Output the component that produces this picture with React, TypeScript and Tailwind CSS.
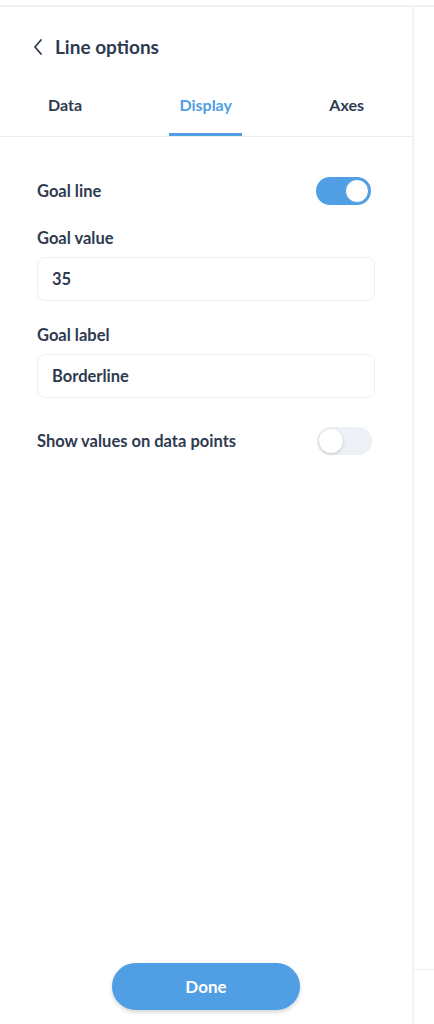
import React, { useState } from 'react';

const textDark = 'text-[#2e3a4f]';

const Toggle: React.FC<{ on: boolean; onChange: () => void }> = ({ on, onChange }) => (
  <button
    type="button"
    onClick={onChange}
    className={`relative flex h-[28px] w-[55px] items-center rounded-full px-[2px] ${
      on ? 'justify-end bg-[#509ee3]' : 'justify-start bg-[#edf0f5]'
    }`}
  >
    <span
      className={`block h-[24px] w-[24px] rounded-full bg-white ${
        on ? 'border border-[#509ee3]' : 'shadow-[0_1px_3px_rgba(0,0,0,0.2)]'
      }`}
    />
  </button>
);

const TextField: React.FC<{ value: string; onChange: (v: string) => void }> = ({ value, onChange }) => (
  <input
    type="text"
    value={value}
    onChange={(e) => onChange(e.target.value)}
    className={`h-[44px] w-full rounded-lg border border-[#eceef1] px-[14px] text-[16.5px] font-bold ${textDark} outline-none`}
  />
);

export default function App() {
  const [tab, setTab] = useState('Display');
  const [goalLine, setGoalLine] = useState(true);
  const [showValues, setShowValues] = useState(false);
  const [goalValue, setGoalValue] = useState('35');
  const [goalLabel, setGoalLabel] = useState('Borderline');

  return (
    <div className="flex h-[1024px] w-[434px] flex-col bg-white font-['Lato',sans-serif]">
      <div className="h-[5px] shrink-0" />
      <div className="flex flex-1 border-t-2 border-[#f2f2f2]">
        {/* sidebar */}
        <div className="flex w-[414px] flex-col border-r-2 border-[#f2f2f2]">
          <div className="flex items-center pl-[31px] pt-[28px]">
            <svg width="14" height="24" viewBox="0 0 14 24" fill="none" className="mr-[10px]">
              <path d="M10 5 L4 12 L10 19" stroke="#2e3a4f" strokeWidth="1.8" strokeLinecap="round" strokeLinejoin="round" />
            </svg>
            <span className={`text-[19px] leading-[24px] font-bold ${textDark}`}>Line options</span>
          </div>

          <div className="mt-[34px] flex justify-between border-b border-[#eceef1] px-[38px]">
            {['Data', 'Display', 'Axes'].map((t) => (
              <button
                key={t}
                type="button"
                onClick={() => setTab(t)}
                className={`border-b-[3px] px-[10px] pb-[16px] text-[16px] leading-[24px] font-bold ${
                  tab === t ? 'border-[#509ee3] text-[#509ee3]' : `border-transparent ${textDark}`
                }`}
              >
                {t}
              </button>
            ))}
          </div>

          <div className="flex flex-col pl-[37px] pr-[37px] pt-[40px]">
            <div className="flex items-center justify-between pr-[4px]">
              <span className={`text-[16.5px] leading-[24px] font-bold ${textDark}`}>Goal line</span>
              <Toggle on={goalLine} onChange={() => setGoalLine(!goalLine)} />
            </div>

            <label className={`mt-[21px] mb-[7px] text-[16.5px] leading-[24px] font-bold ${textDark}`}>Goal value</label>
            <TextField value={goalValue} onChange={setGoalValue} />

            <label className={`mt-[22px] mb-[7px] text-[16.5px] leading-[24px] font-bold ${textDark}`}>Goal label</label>
            <TextField value={goalLabel} onChange={setGoalLabel} />

            <div className="mt-[29px] flex items-center justify-between pr-[3px]">
              <span className={`text-[16.5px] leading-[24px] font-bold ${textDark}`}>Show values on data points</span>
              <Toggle on={showValues} onChange={() => setShowValues(!showValues)} />
            </div>
          </div>

          <div className="mt-auto flex justify-center pb-[14px]">
            <button
              type="button"
              className="h-[47px] w-[188px] rounded-full bg-[#509ee3] text-[17px] font-bold text-white shadow-[0_2px_4px_rgba(0,0,0,0.18)]"
            >
              Done
            </button>
          </div>
        </div>

        {/* right side */}
        <div className="flex flex-1 flex-col">
          <div className="h-[962px] shrink-0" />
          <div className="border-t border-[#eceef1]" />
        </div>
      </div>
    </div>
  );
}
